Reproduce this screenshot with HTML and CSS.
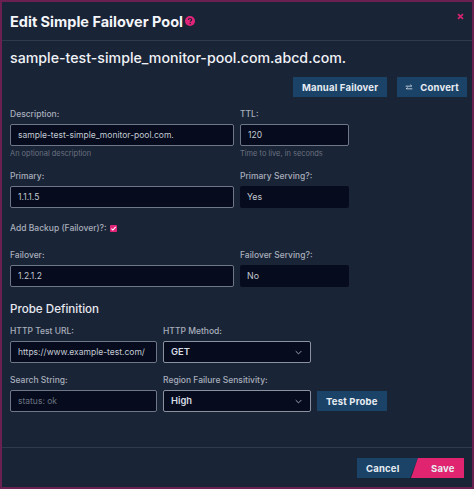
FILE: index.html
```html
<!DOCTYPE html>
<html lang="en">
<head>
<meta charset="utf-8">
<title>Edit Simple Failover Pool</title>
<link rel="stylesheet" href="styles.css">
</head>
<body>
<div class="modal">
  <header class="modal-head">
    <h1 class="modal-title">Edit Simple Failover Pool
      <svg class="help" viewBox="0 0 16 16" aria-hidden="true"><circle cx="8" cy="8" r="8" fill="#e0247a"/><path d="M5.4 6.2C5.5 4.7 6.6 4 8 4c1.5 0 2.6.8 2.6 2.1 0 1.1-.7 1.6-1.4 2-.6.4-.8.6-.8 1.2" fill="none" stroke="#1a2336" stroke-width="1.8"/><circle cx="8.3" cy="12" r="1.1" fill="#1a2336"/></svg>
    </h1>
    <svg class="close" viewBox="0 0 10 10" aria-hidden="true"><path d="M1.5 1.5l7 7M8.5 1.5l-7 7" stroke="#d6246f" stroke-width="2.4" fill="none"/></svg>
  </header>
  <main class="modal-body">
    <h2 class="pool-name">sample-test-simple_monitor-pool.com.abcd.com.</h2>
    <div class="actions">
      <button class="btn">Manual Failover</button>
      <button class="btn convert"><svg class="swap" viewBox="0 0 12 10" aria-hidden="true"><path d="M1 3h9M8 1l2.4 2M11 7H2M4 5L1.6 7" fill="none" stroke="#e4e9f0" stroke-width="1.2"/></svg>Convert</button>
    </div>
    <div class="row first">
      <div class="field wide"><label>Description:</label><div class="input">sample-test-simple_monitor-pool.com.</div><small>An optional description</small></div>
      <div class="field narrow"><label>TTL:</label><div class="input">120</div><small>Time to live, in seconds</small></div>
    </div>
    <div class="row primary">
      <div class="field wide"><label>Primary:</label><div class="input">1.1.1.5</div></div>
      <div class="field narrow"><label>Primary Serving?:</label><div class="input static">Yes</div></div>
    </div>
    <div class="check-row"><label>Add Backup (Failover)?:</label>
      <svg class="check" viewBox="0 0 9 9" aria-hidden="true"><rect width="9" height="9" rx="1" fill="#e0247a"/><path d="M1.8 4.6l1.9 1.9 3.6-4" fill="none" stroke="#fff" stroke-width="1.4"/></svg>
    </div>
    <div class="row failover">
      <div class="field wide"><label>Failover:</label><div class="input">1.2.1.2</div></div>
      <div class="field narrow"><label>Failover Serving?:</label><div class="input static">No</div></div>
    </div>
    <h3 class="section">Probe Definition</h3>
    <div class="row probe">
      <div class="field url"><label>HTTP Test URL:</label><div class="input">https://www.example-test.com/</div></div>
      <div class="field method"><label>HTTP Method:</label><div class="input select">GET<svg class="chev" viewBox="0 0 10 6" aria-hidden="true"><path d="M1 1l4 4 4-4" fill="none" stroke="#a9b2c0" stroke-width="1.3"/></svg></div></div>
    </div>
    <div class="row probe second">
      <div class="field url"><label>Search String:</label><div class="input placeholder">status: ok</div></div>
      <div class="field method"><label>Region Failure Sensitivity:</label><div class="input select">High<svg class="chev" viewBox="0 0 10 6" aria-hidden="true"><path d="M1 1l4 4 4-4" fill="none" stroke="#a9b2c0" stroke-width="1.3"/></svg></div></div>
      <button class="btn test">Test Probe</button>
    </div>
  </main>
  <footer class="modal-foot">
    <div class="pair">
      <button class="btn cancel">Cancel</button>
      <button class="btn save">Save</button>
    </div>
  </footer>
</div>
</body>
</html>
```

FILE: styles.css
```css
* { box-sizing: border-box; }
html, body { margin: 0; height: 100%; }
body {
  background: #6a2152;
  font-family: Inter, "Liberation Sans", sans-serif;
  color: #e8ecf2;
  padding: 2px;
  width: 474px;
  height: 489px;
  overflow: hidden;
}
.modal {
  background: #1a2437;
  height: 485px;
  display: flex;
  flex-direction: column;
}
.modal-head {
  height: 39px;
  flex: none;
  display: flex;
  align-items: center;
  justify-content: space-between;
  padding: 0 8px 0 8px;
  border-bottom: 1px solid #2f3a4d;
}
.modal-title {
  margin: 0;
  font-size: 14.5px;
  font-weight: 700;
  color: #f4f6fa;
  display: flex;
  align-items: center;
  gap: 2px;
}
.help { width: 10px; height: 10px; }
.close { width: 7px; height: 7px; margin-top: -9px; }
.modal-body { flex: 1; padding: 0 5px 0 8px; }
.pool-name {
  margin: 7px 0 0;
  font-size: 14.2px;
  line-height: 19px;
  font-weight: 500;
  color: #f0f2f6;
}
.actions {
  display: flex;
  justify-content: flex-end;
  gap: 10px;
  margin-top: 10px;
}
.btn {
  border: 0;
  background: #1b4368;
  color: #e8edf3;
  font: 700 9.5px Inter, "Liberation Sans", sans-serif;
  letter-spacing: .2px;
  height: 20px;
  padding: 0 9px;
  display: inline-flex;
  align-items: center;
}
.btn.convert { padding: 0 8px; }
.swap { width: 8px; height: 7px; margin-right: 7px; }
.row { display: flex; gap: 6px; }
.row.first { margin-top: 11px; }
.row.primary { margin-top: 11px; }
.row.failover { margin-top: 14px; }
.row.probe { margin-top: 8px; }
.row.probe.second { margin-top: 11px; align-items: flex-end; }
.field label, .check-row label {
  display: block;
  font-size: 8.5px;
  line-height: 13px;
  font-weight: 500;
  color: #a8afbb;
}
.field label { margin-bottom: 3px; }
.wide { width: 224px; }
.narrow { width: 109px; }
.url { width: 147px; }
.method { width: 148px; }
.input {
  height: 22px;
  background: #060c1d;
  border: 1px solid #6e7787;
  border-radius: 2px;
  padding: 0 7px;
  font-size: 8.5px;
  line-height: 20px;
  color: #c3c9d3;
  white-space: nowrap;
  overflow: hidden;
}
.input.static { border-color: transparent; padding-left: 6px; font-size: 8.8px; }
.input.placeholder { color: #6a7280; }
.input.select {
  display: flex;
  align-items: center;
  justify-content: space-between;
  font-weight: 600;
  font-size: 9.4px;
  color: #d9dde4;
  padding-right: 8px;
  border-color: #8a92a0;
}
.chev { width: 7px; height: 5px; }
small {
  display: block;
  margin-top: 3px;
  font-size: 7.45px;
  line-height: 10px;
  color: #69717f;
}
.check-row { display: flex; align-items: center; gap: 3px; margin-top: 14px; height: 13px; }
.check { width: 7px; height: 7px; }
.section {
  margin: 14px 0 0;
  font-size: 11.6px;
  line-height: 16px;
  font-weight: 500;
  color: #e6e9ef;
}
.btn.test { margin-bottom: 1px; padding: 0 9px; }
.modal-foot {
  height: 40px;
  flex: none;
  border-top: 1px solid #2f3a4d;
  display: flex;
  justify-content: flex-end;
  align-items: flex-start;
  padding: 10px 8px 0 0;
}
.pair { display: flex; }
.cancel { width: 61px; padding-left: 9px; clip-path: polygon(0 0, 100% 0, 87% 100%, 0 100%); }
.save {
  width: 53px;
  margin-left: -7px;
  padding-left: 20px;
  background: #e0246f;
  clip-path: polygon(13% 0, 100% 0, 100% 100%, 0 100%);
}
```
